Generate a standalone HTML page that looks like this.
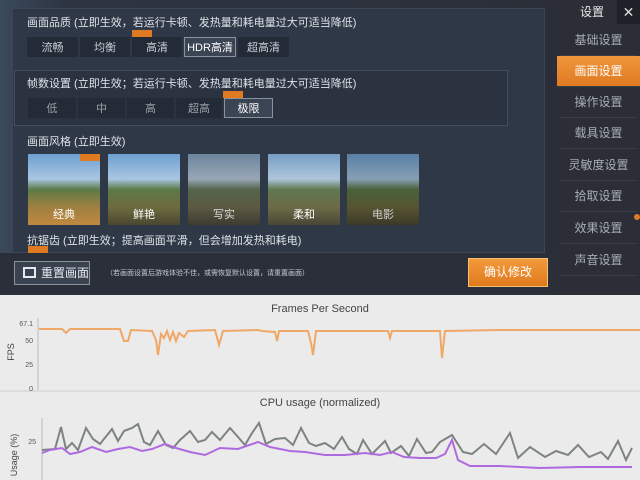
<!DOCTYPE html>
<html><head><meta charset="utf-8"><style>
*{margin:0;padding:0;box-sizing:border-box}
body{width:640px;height:480px;overflow:hidden;position:relative;font-family:"Liberation Sans","Noto Sans CJK SC",sans-serif;background:#2b3240}
.game{position:absolute;left:0;top:0;width:640px;height:295px;background:linear-gradient(90deg,#3a4a5a 0%,#2d3543 10%,#2c313c 60%,#2a2d35 100%)}
.panel{position:absolute;left:12px;top:8px;width:533px;height:245px;background:#2f3846;border:1px solid #3c4655}
.t{position:absolute;color:#dfe3ea;font-size:11px;white-space:nowrap}
.row{position:absolute;display:flex;gap:2px}
.btn{height:20px;background:#232b37;color:#c9ced6;font-size:11px;display:flex;align-items:center;justify-content:center}
.btn.sel{background:#3a4452;border:1px solid #8a929e;color:#fff}
.tag{position:absolute;background:#e07a22;width:20px;height:7px;font-size:5px;color:#fff}
.fbox{position:absolute;left:14px;top:70px;width:494px;height:56px;border:1px solid #434d5b;background:#2b3340}
.th{position:absolute;top:154px;width:72px;height:71px;background:linear-gradient(180deg,#6e9fd0 0%,#a9c6e2 35%,#5c7a48 50%,#6e6a3e 75%,#4a4730 100%)}
.th span{position:absolute;bottom:3px;width:100%;text-align:center;color:#fff;font-size:11px}
.bottom{position:absolute;left:0;top:253px;width:555px;height:42px;background:#2a2f39}
.side{position:absolute;left:557px;top:0;width:83px;height:295px;background:#2b2e36}
.si{position:absolute;left:3px;width:77px;height:31px;color:#a9adb5;font-size:12px;text-align:center;line-height:31px;border-bottom:1px solid #3a3e47}
.chart{position:absolute;left:0;top:295px;width:640px;height:185px;background:#ebebeb}
</style></head><body>
<div class="game">
<div class="panel"></div>
<div class="t" style="left:27px;top:14px">画面品质 (立即生效，若运行卡顿、发热量和耗电量过大可适当降低)</div>
<div class="row" style="left:27px;top:37px">
<div class="btn" style="width:51px">流畅</div><div class="btn" style="width:50px">均衡</div><div class="btn" style="width:50px">高清</div><div class="btn sel" style="width:52px">HDR高清</div><div class="btn" style="width:51px">超高清</div></div>
<div class="tag" style="left:132px;top:30px"></div>
<div class="fbox"></div>
<div class="t" style="left:27px;top:75px">帧数设置 (立即生效；若运行卡顿、发热量和耗电量过大可适当降低)</div>
<div class="row" style="left:28px;top:98px">
<div class="btn" style="width:48px;color:#9aa0a8">低</div><div class="btn" style="width:47px;color:#9aa0a8">中</div><div class="btn" style="width:47px;color:#9aa0a8">高</div><div class="btn" style="width:46px;color:#9aa0a8">超高</div><div class="btn sel" style="width:49px">极限</div></div>
<div class="tag" style="left:223px;top:91px"></div>
<div class="t" style="left:27px;top:133px">画面风格 (立即生效)</div>
<div class="th" style="left:28px;background:linear-gradient(180deg,#6e9fd0 0%,#a9c6e2 35%,#5c7a48 50%,#a08040 75%,#c08840 100%)"><span>经典</span></div>
<div class="tag" style="left:80px;top:154px"></div>
<div class="th" style="left:108px"><span>鲜艳</span></div>
<div class="th" style="left:188px;filter:saturate(.6) brightness(.85)"><span>写实</span></div>
<div class="th" style="left:268px;filter:saturate(.8)"><span>柔和</span></div>
<div class="th" style="left:347px;filter:brightness(.8)"><span>电影</span></div>
<div class="t" style="left:27px;top:232px">抗锯齿 (立即生效；提高画面平滑，但会增加发热和耗电)</div>
<div class="tag" style="left:28px;top:246px"></div>
<div class="bottom"></div>
<div style="position:absolute;left:14px;top:261px;width:76px;height:24px;background:#3a4250;border:1px solid #8a929e;color:#e6e9ee;font-size:12px;line-height:22px;padding-left:26px">重置画面</div>
<div style="position:absolute;left:23px;top:267px;width:13px;height:11px;border:2px solid #e6e9ee"></div>
<div class="t" style="left:106px;top:268px;font-size:7px;color:#c5cad2">（若画面设置后游戏体验不佳，或需恢复默认设置，请重置画面）</div>
<div style="position:absolute;left:468px;top:258px;width:80px;height:29px;background:linear-gradient(180deg,#f29a3a,#e07a1e);border:1px solid #f6c070;color:#fff;font-size:12px;text-align:center;line-height:27px">确认修改</div>
<div class="side">
<div style="position:absolute;left:0;top:0;width:70px;height:24px;color:#e8e8e8;font-size:12px;line-height:24px;text-align:center">设置</div>
<div style="position:absolute;left:60px;top:0;width:23px;height:24px;background:#1f2128;color:#ddd;font-size:14px;line-height:24px;text-align:center">✕</div>
<div class="si" style="top:25px">基础设置</div>
<div class="si" style="top:56px;left:0;width:83px;background:linear-gradient(180deg,#f0963a,#e07a22);color:#fff">画面设置</div>
<div class="si" style="top:87px">操作设置</div>
<div class="si" style="top:118px">载具设置</div>
<div class="si" style="top:150px">灵敏度设置</div>
<div class="si" style="top:181px">拾取设置</div>
<div class="si" style="top:213px">效果设置</div>
<div class="si" style="top:245px">声音设置</div>
<div style="position:absolute;left:77px;top:214px;width:6px;height:6px;border-radius:3px;background:#e07a22"></div>
</div>
</div>
<div class="chart">
<svg width="640" height="185" viewBox="0 295 640 185" style="position:absolute;left:0;top:0" font-family="Liberation Sans,sans-serif">
<line x1="0" y1="391" x2="640" y2="391" stroke="#cfcfcf"/>
<line x1="38" y1="318" x2="38" y2="390" stroke="#bbb"/>
<line x1="42" y1="418" x2="42" y2="480" stroke="#bbb"/>
<text x="320" y="312" font-size="11" fill="#444" text-anchor="middle">Frames Per Second</text>
<text x="320" y="406" font-size="11" fill="#444" text-anchor="middle">CPU usage (normalized)</text>
<g font-size="7" fill="#555" text-anchor="end"><text x="33" y="326">67.1</text><text x="33" y="343">50</text><text x="33" y="367">25</text><text x="33" y="391">0</text><text x="36" y="444">25</text></g>
<text transform="translate(14,352) rotate(-90)" font-size="9" fill="#444" text-anchor="middle">FPS</text>
<text transform="translate(17,455) rotate(-90)" font-size="9" fill="#444" text-anchor="middle">Usage (%)</text>
<polyline fill="none" stroke="#f0a868" stroke-width="2" points="39,329 62,329 66,333 70,329 120,329 124,341 128,341 131,330 152,331 156,340 158,355 161,334 164,338 167,331 170,340 173,332 176,341 179,333 184,337 188,331 215,330 219,345 223,331 258,330 262,331 275,332 277,341 279,331 308,331 311,343 313,355 316,331 388,331 390,338 392,331 440,331 442,358 445,331 500,330 640,330"/>
<polyline fill="none" stroke="#7d8480" stroke-width="2" points="42,450 55,449 61,427 66,449 72,443 78,450 86,428 93,439 100,444 112,429 118,441 124,431 132,428 138,424 144,442 150,445 158,431 166,445 173,448 180,440 190,431 198,442 205,440 212,432 220,440 230,428 238,437 245,445 252,433 259,423 266,444 275,439 285,438 293,445 301,428 309,443 316,446 325,443 334,449 342,437 349,449 357,454 363,440 372,454 385,441 391,453 401,446 409,456 417,439 426,453 432,452 440,442 452,435 463,452 472,454 484,444 496,454 510,433 518,458 530,447 545,457 556,451 568,455 578,445 589,457 601,452 608,459 618,441 626,460 632,448"/>
<polyline fill="none" stroke="#b06ae0" stroke-width="2" points="42,453 50,450 62,448 70,454 80,452 92,447 106,452 118,449 130,447 142,451 152,449 165,444 176,448 190,452 205,455 220,448 238,449 258,442 270,447 290,451 305,452 325,455 345,455 365,453 380,455 392,452 404,457 420,458 436,458 445,454 452,440 458,460 470,466 500,466 540,468 580,467 632,467"/>
</svg>
</div>
</body></html>
